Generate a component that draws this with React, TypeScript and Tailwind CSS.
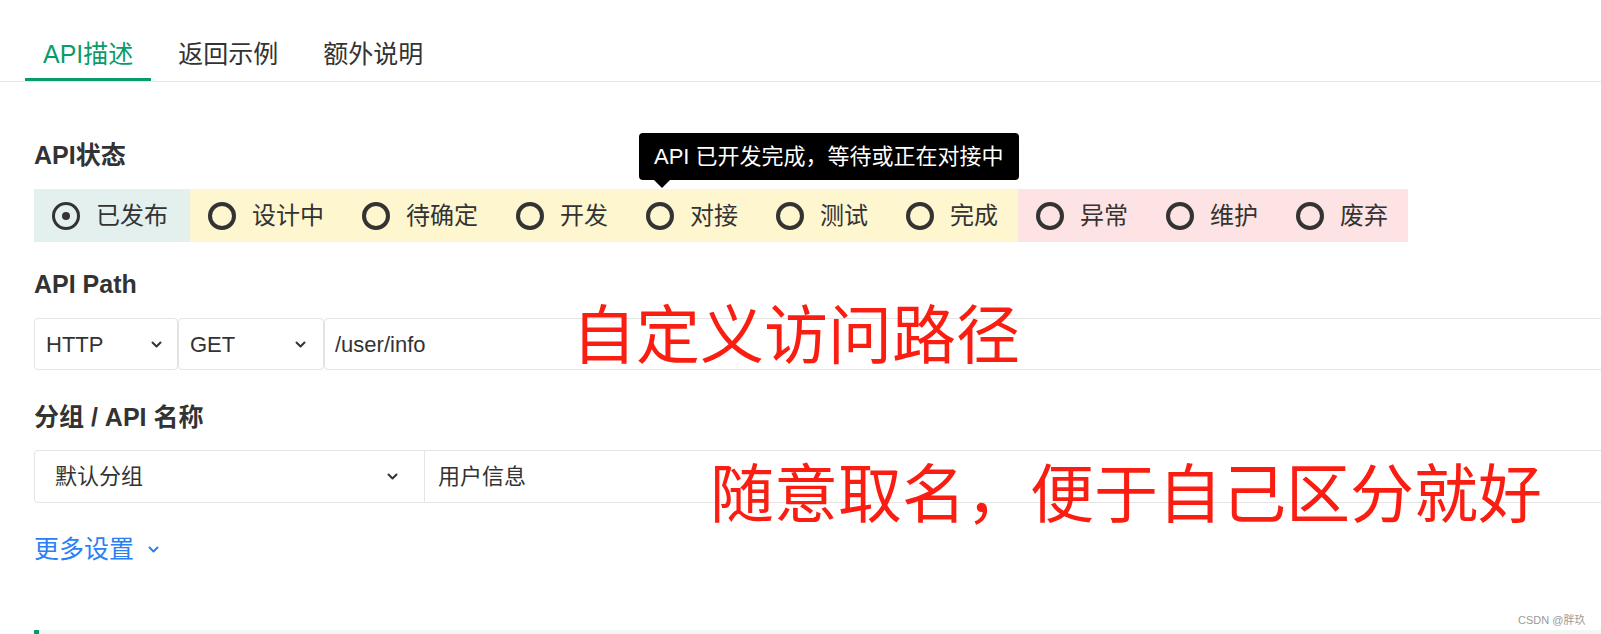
import React from 'react';

type Opt = { label: string; checked?: boolean; tip?: string };

const groups: { bg: string; items: Opt[] }[] = [
    { bg: 'bg-[#e3f0ee]', items: [{ label: '已发布', checked: true }] },
    {
        bg: 'bg-[#fdf6cf]',
        items: [
            { label: '设计中' },
            { label: '待确定' },
            { label: '开发' },
            { label: '对接', tip: 'API 已开发完成，等待或正在对接中' },
            { label: '测试' },
            { label: '完成' },
        ],
    },
    { bg: 'bg-[#fde3e4]', items: [{ label: '异常' }, { label: '维护' }, { label: '废弃' }] },
];

function Chevron({ className = 'text-[#333]' }: { className?: string }) {
    return (
        <svg width="11" height="7" viewBox="0 0 11 7" className={className}>
            <path d="M1.5 1.5l4 4 4-4" fill="none" stroke="currentColor" strokeWidth="2" strokeLinecap="round" strokeLinejoin="round" />
        </svg>
    );
}

function Radio({ opt, wide }: { opt: Opt; wide?: boolean }) {
    return (
        <div className={`relative flex h-full items-center gap-[16px] pl-[18px] ${wide ? 'pr-[22px]' : 'pr-[20px]'}`}>
            {opt.checked ? (
                <span className="flex h-[28px] w-[28px] items-center justify-center rounded-full border-[3px] border-[#333]">
                    <span className="h-[8px] w-[8px] rounded-full bg-[#333]" />
                </span>
            ) : (
                <span className="h-[28px] w-[28px] rounded-full border-[4px] border-[#333]" />
            )}
            <span className="text-[24px] leading-none text-[#333]">{opt.label}</span>

            {opt.tip && (
                <div className="absolute bottom-[calc(100%+9px)] left-[11px] whitespace-nowrap rounded-[4px] bg-black px-[15px] text-[22px] leading-[47px] text-white">
                    {opt.tip}
                    <span className="absolute left-[15px] top-full h-0 w-0 border-x-[8px] border-t-[8px] border-x-transparent border-t-black" />
                </div>
            )}
        </div>
    );
}

export default function App() {
    const tabs = ['API描述', '返回示例', '额外说明'];

    return (
        <div className="relative h-[634px] w-full overflow-hidden bg-white font-['Liberation_Sans','Noto_Sans_CJK_SC',sans-serif] text-[#333]">
            {/* Tabs */}
            <div className="flex gap-[9px] border-b border-[#e8e8e8] pl-[25px]">
                {tabs.map((t, i) => (
                    <div
                        key={t}
                        className={
                            i === 0
                                ? 'border-b-[3px] border-[#0a9b6c] px-[18px] pb-[8px] pt-[38px] text-[25px] leading-[32px] text-[#0a9b6c]'
                                : 'border-b-[3px] border-transparent px-[18px] pb-[8px] pt-[38px] text-[25px] leading-[32px] text-[#333]'
                        }
                    >
                        {t}
                    </div>
                ))}
            </div>

            <div className="w-[1660px] pl-[34px]">
                {/* API status */}
                <div className="mt-[57px] text-[25px] font-bold leading-[32px]">API状态</div>
                <div className="mt-[18px] flex h-[53px]">
                    {groups.map((g, gi) => (
                        <div key={gi} className={`flex h-full ${g.bg}`}>
                            {g.items.map((o) => (
                                <Radio key={o.label} opt={o} wide={gi === 0} />
                            ))}
                        </div>
                    ))}
                </div>

                {/* API path */}
                <div className="mt-[26px] text-[25px] font-bold leading-[32px]">API Path</div>
                <div className="mt-[18px] flex h-[52px] text-[22px] text-[#333]">
                    <div className="flex w-[144px] items-center justify-between rounded-[4px] border border-[#e4e4e4] pl-[11px] pr-[15px]">
                        HTTP <Chevron />
                    </div>
                    <div className="flex w-[146px] items-center justify-between rounded-[4px] border border-[#e4e4e4] pl-[11px] pr-[17px]">
                        GET <Chevron />
                    </div>
                    <div className="flex flex-1 items-center rounded-[4px] border border-[#e4e4e4] pl-[10px]">/user/info</div>
                </div>

                {/* Group / name */}
                <div className="mt-[31px] text-[25px] font-bold leading-[32px]">分组 / API 名称</div>
                <div className="mt-[17px] flex h-[53px] text-[22px] text-[#333]">
                    <div className="flex w-[391px] items-center justify-between rounded-l-[4px] border border-[#e4e4e4] pl-[20px] pr-[26px]">
                        默认分组 <Chevron />
                    </div>
                    <div className="flex flex-1 items-center border border-l-0 border-[#e4e4e4] pl-[13px]">用户信息</div>
                </div>

                {/* More settings */}
                <div className="mt-[30px] flex items-center gap-[14px] text-[25px] leading-[32px] text-[#2b7ff3]">
                    更多设置 <Chevron className="text-[#2b7ff3]" />
                </div>

                <div className="mt-[65px] h-[10px] border-l-[5px] border-[#0a9b6c] bg-[#f5f5f5]" />
            </div>

            {/* Annotations */}
            <div className="absolute left-[572px] top-[300px] whitespace-nowrap text-[64px] leading-[72px] text-[#fa1e12]">自定义访问路径</div>
            <div className="absolute left-[710px] top-[459px] whitespace-nowrap text-[64px] leading-[72px] text-[#fa1e12]">随意取名，便于自己区分就好</div>

            <div className="absolute left-[1518px] top-[612px] text-[11px] text-[#9a9a9a]">CSDN @胖玖</div>
        </div>
    );
}
